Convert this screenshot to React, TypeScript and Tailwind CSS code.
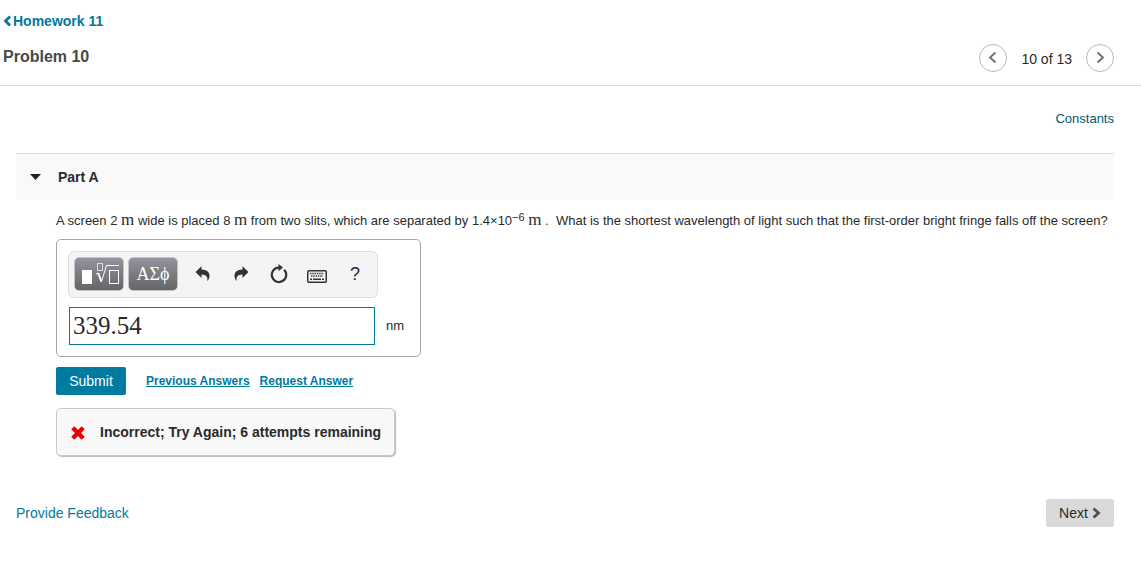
import React, { useState } from 'react';

const Unit = ({ children }: { children: React.ReactNode }) => (
  <span className="font-['Liberation_Serif',serif] text-[17px] leading-none">{children}</span>
);

const ThinChevron = ({ flip = false }: { flip?: boolean }) => (
  <svg width="10" height="14" viewBox="0 0 10 14" fill="none" stroke="#65706d" strokeWidth="1.800" aria-hidden="true">
    <path d={flip ? 'M2.500 1.500L8 6.500 2.500 11.500' : 'M7.500 1.500L2 6.500 7.500 11.500'} />
  </svg>
);

const BoldChevron = ({ flip = false }: { flip?: boolean }) => (
  <svg width="9" height="13" viewBox="0 0 9 13" fill="none" stroke="currentColor" strokeWidth="2.800" aria-hidden="true">
    <path d={flip ? 'M1.500 1.500l5 4.500-5 4.500' : 'M7 1.500L2.500 6 7 10.500'} />
  </svg>
);

const TemplatesIcon = () => (
  <svg width="40" height="24" viewBox="0 0 40 24" fill="none" stroke="#fff" aria-hidden="true" className="shrink-0">
    <rect x="3" y="8" width="10" height="14" fill="#fff" stroke="none" />
    <rect x="18.500" y="1.500" width="5" height="7" stroke="#ddd" />
    <path d="M17 12l2.500-1L22.500 19.500 27.500 3.500H40" />
    <path d="M19.300 11.500l3 8" strokeWidth="1.800" />
    <rect x="30.500" y="8.500" width="9" height="13" />
  </svg>
);

const UndoIcon = () => (
  <svg width="16" height="16" viewBox="0 0 16 16" fill="#333" aria-hidden="true">
    <path d="M.5 6L6.500 .2V3.500c5 .1 8 2.400 8 6.200 0 2.100-.9 3.900-2.200 5.300.7-4.200-1-6.400-5.800-6.500v3.400z" />
  </svg>
);

const RedoIcon = () => (
  <svg width="16" height="16" viewBox="0 0 16 16" fill="#333" aria-hidden="true">
    <path d="M15.500 6L9.500 .2V3.500c-5 .1-8 2.400-8 6.200 0 2.100.9 3.900 2.200 5.300-.7-4.200 1-6.400 5.800-6.500v3.400z" />
  </svg>
);

const ResetIcon = () => (
  <svg width="18" height="20" viewBox="0 0 18 20" fill="none" aria-hidden="true">
    <path d="M14.200 5.800A7.200 7.200 0 1 1 9 3.600" stroke="#333" strokeWidth="2.200" />
    <path d="M8.500 0L13 3.600 8.500 7.200z" fill="#333" />
  </svg>
);

const KeyboardIcon = () => (
  <svg width="20" height="13" viewBox="0 0 20 13" fill="none" aria-hidden="true">
    <rect x=".75" y=".75" width="18.500" height="11.500" rx="1" stroke="#333" strokeWidth="1.500" />
    <path d="M3 3.500h14M4 6h12" stroke="#333" strokeWidth="1.300" strokeDasharray="1.400 .9" />
    <path d="M3 9.200h2M6 9.200h8M15 9.200h2" stroke="#333" strokeWidth="1.400" />
  </svg>
);

const CrossIcon = () => (
  <svg width="14" height="14" viewBox="0 0 14 14" fill="none" stroke="#e90000" strokeWidth="4.400" aria-hidden="true">
    <path d="M1.800 1.800l10.400 10.400M12.200 1.800L1.800 12.200" />
  </svg>
);

const toolButton = 'flex h-8 w-[38px] items-center justify-center';
const templateButton =
  'flex h-[34px] w-[50px] items-center justify-center rounded-[5px] border border-[#c4c4c8] bg-linear-to-b from-[#95939f] to-[#656565] text-white';
const pagerButton = 'flex size-7 items-center justify-center rounded-full border border-[#bbb]';

const Header = () => (
  <header className="border-b border-[#ddd] pr-[27px] pb-[13px] pl-[3px] pt-3">
    <a href="#homework" className="flex h-[18px] w-fit items-center gap-px text-[14px] font-bold text-[#007a9f]">
      <BoldChevron />
      Homework 11
    </a>
    <div className="flex items-start justify-between">
      <h1 className="mt-[15px] text-[16px] leading-6 font-bold text-[#484848]">Problem 10</h1>
      <nav className="mt-[14px] flex items-center gap-[14px] text-[14px]">
        <button aria-label="Previous problem" className={pagerButton}>
          <ThinChevron />
        </button>
        <span className="pt-[3px]">10 of 13</span>
        <button aria-label="Next problem" className={pagerButton}>
          <ThinChevron flip />
        </button>
      </nav>
    </div>
  </header>
);

const AnswerBox = () => {
  const [answer, setAnswer] = useState('339.54');

  return (
    <div className="w-[365px] rounded-[5px] border border-[#a5a5a5] p-[11px]">
      <div className="flex h-[47px] w-[310px] items-center rounded-[6px] border border-[#ddd] bg-[#f4f4f4] pb-px pl-[5px]">
        <button aria-label="Templates" className={templateButton}>
          <TemplatesIcon />
        </button>
        <button
          aria-label="Symbols"
          className={`${templateButton} ml-1 font-['Liberation_Serif',serif] text-[18px]`}
        >
          ΑΣϕ
        </button>
        <div className="ml-[6px] flex items-center">
          <button aria-label="Undo" className={toolButton}><UndoIcon /></button>
          <button aria-label="Redo" className={toolButton}><RedoIcon /></button>
          <button aria-label="Reset" className={toolButton}><ResetIcon /></button>
          <button aria-label="Keyboard shortcuts" className={`${toolButton} pt-1`}><KeyboardIcon /></button>
          <button aria-label="Help" className={`${toolButton} text-[18px]`}>?</button>
        </div>
      </div>
      <label className="mt-[9px] flex items-center text-[13px]">
        <input
          type="text"
          aria-label="Answer in nm"
          value={answer}
          onChange={(e) => setAnswer(e.target.value)}
          className="ml-px h-[38px] w-[306px] border border-[#007a9f] px-[3px] font-['Liberation_Serif',serif] text-[25px] outline-none"
        />
        <span className="ml-[11px]">nm</span>
      </label>
    </div>
  );
};

export default function App() {
  return (
    <div className="bg-white font-['Liberation_Sans',Arial,sans-serif] text-[#2a2a2a]">
      <Header />
      <main className="pr-[27px] pl-4">
        <div className="flex justify-end pt-[23px] text-[13px] leading-5">
          <a href="#constants" className="text-[#005a70]">Constants</a>
        </div>

        <section className="mt-6">
          <h2 className="border-t border-[#ddd] bg-[#f9f9f9]">
            <button className="flex h-[46px] w-full items-center pl-[14px] text-[14px] font-bold">
              <svg width="11" height="6" viewBox="0 0 11 6" fill="#222" className="mr-[17px]" aria-hidden="true">
                <path d="M0 0h11L5.500 6z" />
              </svg>
              Part A
            </button>
          </h2>

          <div className="pl-10">
            <p className="pt-[11px] text-[13px] leading-5">
              A screen 2 <Unit>m</Unit> wide is placed 8 <Unit>m</Unit> from two slits, which are separated by{' '}
              1.4×10<sup className="-top-1 text-[11px]">−6</sup> <Unit>m</Unit> .&nbsp; What is the shortest wavelength
              of light such that the first-order bright fringe falls off the screen?
            </p>
            <div className="mt-2">
              <AnswerBox />
            </div>

            <div className="mt-[10px] flex items-center text-[12px] font-bold text-[#007a9f]">
              <button className="mr-5 h-7 w-[70px] rounded-[2px] bg-[#007a9f] text-[14px] font-normal text-white">
                Submit
              </button>
              <a href="#previous" className="mr-[10px] underline">Previous Answers</a>
              <a href="#request" className="underline">Request Answer</a>
            </div>

            <div className="mt-[13px] flex h-12 w-fit items-center rounded-[5px] border border-[#c8c8c8] bg-[#f8f8f8] pt-px pr-[13px] pl-[14px] text-[14px] font-bold shadow-[1px_1px_1px_#bbb]">
              <CrossIcon />
              <span className="ml-[15px]">Incorrect; Try Again; 6 attempts remaining</span>
            </div>
          </div>
        </section>

        <footer className="mt-[43px] flex items-center justify-between text-[14px]">
          <a href="#feedback" className="text-[#007a9f]">Provide Feedback</a>
          <button className="flex h-7 w-[68px] items-center justify-center gap-1 rounded-[2px] bg-[#d9d9d9]">
            Next
            <span className="text-[#505050]"><BoldChevron flip /></span>
          </button>
        </footer>
      </main>
    </div>
  );
}
